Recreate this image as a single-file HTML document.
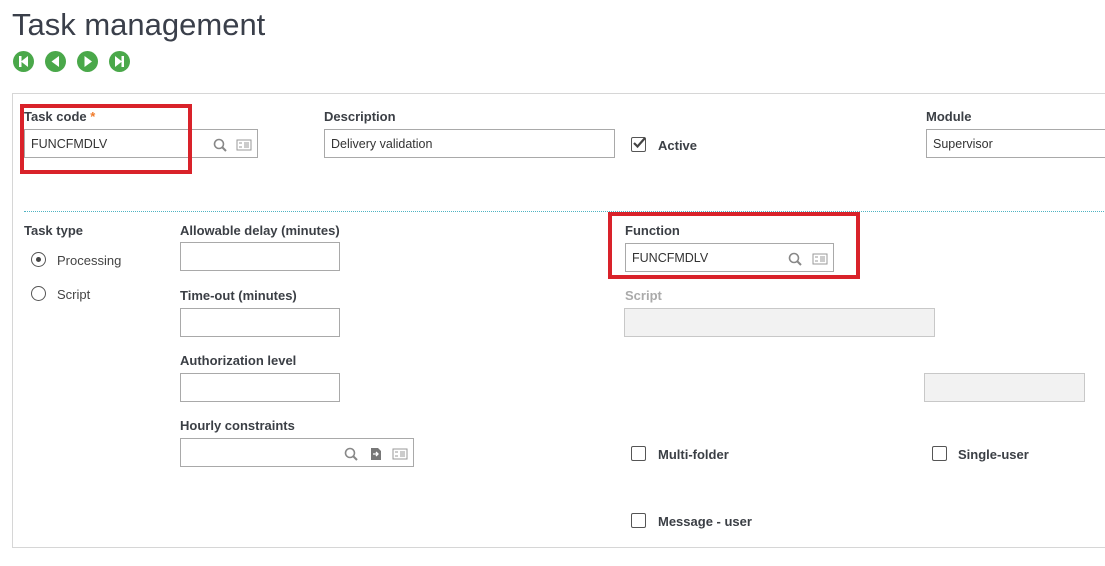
<!DOCTYPE html>
<html><head><meta charset="utf-8"><style>
*{margin:0;padding:0;box-sizing:border-box}
body{width:1105px;height:566px;background:#fff;font-family:"Liberation Sans",sans-serif;position:relative;overflow:hidden;color:#333}
.a{position:absolute}
.lbl{position:absolute;font-size:13px;font-weight:bold;color:#3b3f45}
.inp{position:absolute;border:1px solid #a9a9a9;background:#fff;height:29px;font-size:12.5px;color:#333;padding:7px 0 0 6px}
.gry{background:#f2f2f2;border-color:#c8c8c8}
.red{position:absolute;border:4px solid #d9222a}
.nav{position:absolute;top:51px;width:21px;height:21px;border-radius:50%;background:#4aa84a}
.cb{position:absolute;width:15px;height:15px;border:1.5px solid #555;border-radius:2px;background:#fff}
.rb{position:absolute;width:15px;height:15px;border:1.5px solid #555;border-radius:50%}
.txt{position:absolute;font-size:13px;color:#444}
.ic{position:absolute;top:8px}
</style></head><body>
<div class="a" style="left:12px;top:7px;font-size:31px;color:#3a3f4a">Task management</div>
<div class="nav" style="left:13px"><svg width="21" height="21"><rect x="6" y="5" width="2.5" height="11" fill="#fff"/><path d="M15 5L8 10.5L15 16Z" fill="#fff"/></svg></div>
<div class="nav" style="left:45px"><svg width="21" height="21"><path d="M14 5L6.5 10.5L14 16Z" fill="#fff"/></svg></div>
<div class="nav" style="left:77px"><svg width="21" height="21"><path d="M7.5 5L15 10.5L7.5 16Z" fill="#fff"/></svg></div>
<div class="nav" style="left:109px"><svg width="21" height="21"><rect x="12.5" y="5" width="2.5" height="11" fill="#fff"/><path d="M6 5L13 10.5L6 16Z" fill="#fff"/></svg></div>

<div class="a" style="left:12px;top:93px;width:1100px;height:455px;border:1px solid #d6d6d6;border-right:none"></div>

<div class="lbl" style="left:24px;top:109px">Task code <span style="color:#f07a2a">*</span></div>
<div class="inp" style="left:24px;top:129px;width:234px">FUNCFMDLV
<svg class="ic" style="left:188px" width="14" height="14"><circle cx="6" cy="6" r="4.5" stroke="#888" stroke-width="1.6" fill="none"/><path d="M9 9L13 13" stroke="#888" stroke-width="2"/></svg>
<svg class="ic" style="left:211px" width="16" height="14"><rect x="1" y="2" width="14" height="10" fill="none" stroke="#999"/><path d="M3 5h3M3 9h3M8 5h5M8 7h5M8 9h5" stroke="#999"/></svg></div>
<div class="red" style="left:20px;top:104px;width:172px;height:70px"></div>

<div class="lbl" style="left:324px;top:109px">Description</div>
<div class="inp" style="left:324px;top:129px;width:291px">Delivery validation</div>

<div class="cb" style="left:631px;top:137px"><svg width="14" height="14" style="position:absolute;left:0;top:-2px"><path d="M2 7L5.5 10.5L13 2" stroke="#444" stroke-width="2.2" fill="none"/></svg></div>
<div class="lbl" style="left:658px;top:138px">Active</div>

<div class="lbl" style="left:926px;top:109px">Module</div>
<div class="inp" style="left:926px;top:129px;width:200px">Supervisor</div>

<div class="a" style="left:24px;top:211px;width:1090px;border-top:1px dotted #4fb3c2"></div>

<div class="lbl" style="left:24px;top:223px">Task type</div>
<div class="rb" style="left:31px;top:252px"><div class="a" style="left:3.5px;top:3.5px;width:5px;height:5px;border-radius:50%;background:#444"></div></div>
<div class="txt" style="left:57px;top:253px">Processing</div>
<div class="rb" style="left:31px;top:286px"></div>
<div class="txt" style="left:57px;top:287px">Script</div>

<div class="lbl" style="left:180px;top:223px">Allowable delay (minutes)</div>
<div class="inp" style="left:180px;top:242px;width:160px"></div>
<div class="lbl" style="left:180px;top:288px">Time-out (minutes)</div>
<div class="inp" style="left:180px;top:308px;width:160px"></div>
<div class="lbl" style="left:180px;top:353px">Authorization level</div>
<div class="inp" style="left:180px;top:373px;width:160px"></div>
<div class="lbl" style="left:180px;top:418px">Hourly constraints</div>
<div class="inp" style="left:180px;top:438px;width:234px">
<svg class="ic" style="left:163px" width="14" height="14"><circle cx="6" cy="6" r="4.5" stroke="#888" stroke-width="1.6" fill="none"/><path d="M9 9L13 13" stroke="#888" stroke-width="2"/></svg>
<svg class="ic" style="left:188px" width="14" height="14"><path d="M2 1h7l3 3v9H2z" fill="#777"/><path d="M4 7h5M7 5l2 2-2 2" stroke="#fff" stroke-width="1.3" fill="none"/></svg>
<svg class="ic" style="left:211px" width="16" height="14"><rect x="1" y="2" width="14" height="10" fill="none" stroke="#999"/><path d="M3 5h3M3 9h3M8 5h5M8 7h5M8 9h5" stroke="#999"/></svg></div>

<div class="lbl" style="left:625px;top:223px">Function</div>
<div class="inp" style="left:625px;top:243px;width:209px">FUNCFMDLV
<svg class="ic" style="left:162px" width="14" height="14"><circle cx="6" cy="6" r="4.5" stroke="#888" stroke-width="1.6" fill="none"/><path d="M9 9L13 13" stroke="#888" stroke-width="2"/></svg>
<svg class="ic" style="left:186px" width="16" height="14"><rect x="1" y="2" width="14" height="10" fill="none" stroke="#999"/><path d="M3 5h3M3 9h3M8 5h5M8 7h5M8 9h5" stroke="#999"/></svg></div>
<div class="red" style="left:608px;top:212px;width:252px;height:67px"></div>

<div class="lbl" style="left:625px;top:288px;color:#aaa">Script</div>
<div class="inp gry" style="left:624px;top:308px;width:311px"></div>
<div class="inp gry" style="left:924px;top:373px;width:161px"></div>

<div class="cb" style="left:631px;top:446px"></div>
<div class="lbl" style="left:658px;top:447px">Multi-folder</div>
<div class="cb" style="left:932px;top:446px"></div>
<div class="lbl" style="left:958px;top:447px">Single-user</div>
<div class="cb" style="left:631px;top:513px"></div>
<div class="lbl" style="left:658px;top:514px">Message - user</div>
</body></html>
